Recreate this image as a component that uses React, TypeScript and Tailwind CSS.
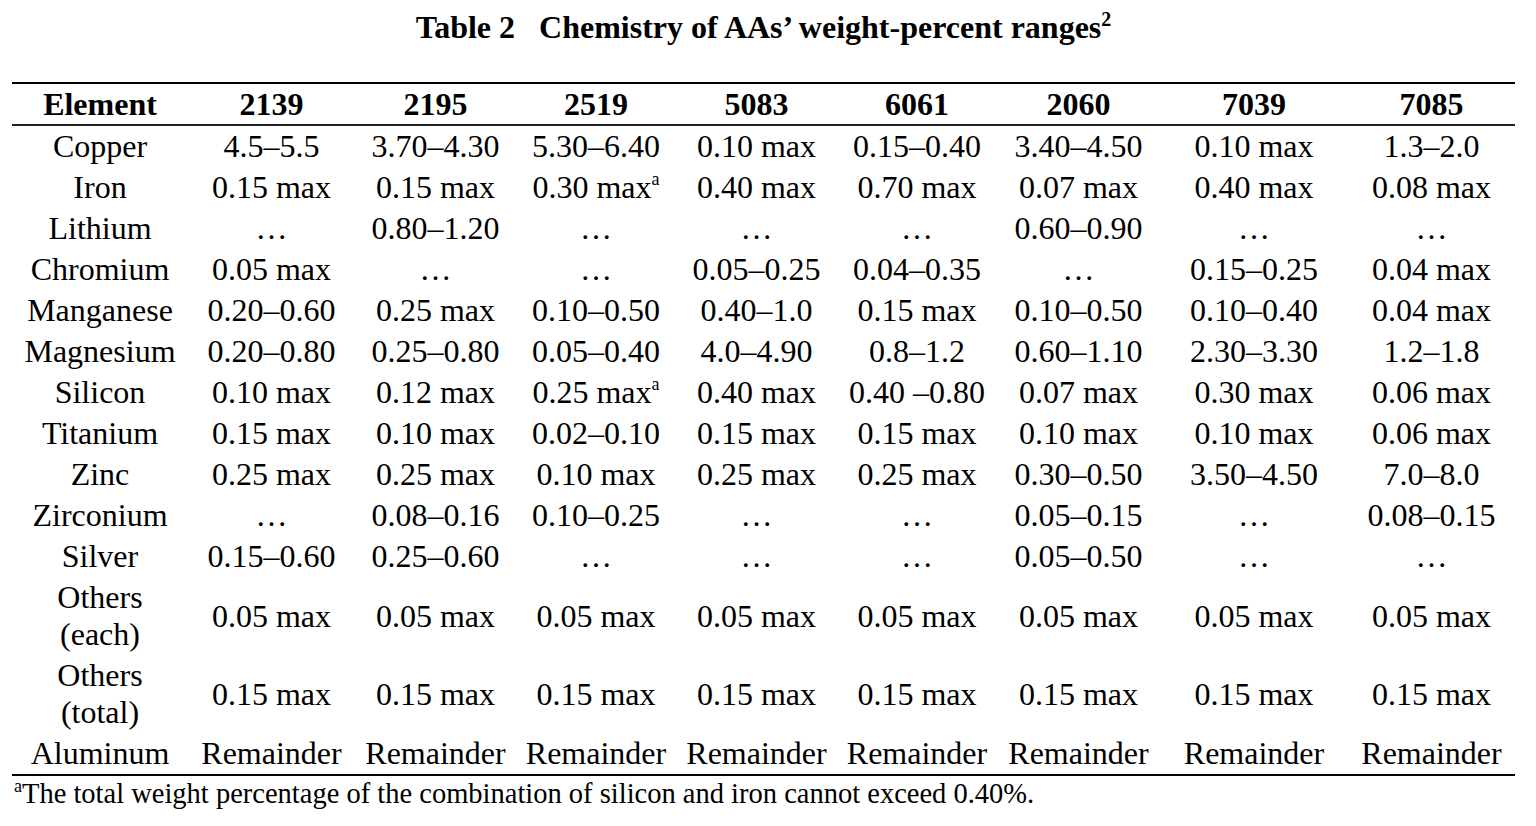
import React from 'react';

const alloys = ['2139', '2195', '2519', '5083', '6061', '2060', '7039', '7085'];

type Cell = string | { v: string; note: string };

const rows: { name: string[]; cells: Cell[]; tall?: boolean }[] = [
  { name: ['Copper'], cells: ['4.5–5.5', '3.70–4.30', '5.30–6.40', '0.10 max', '0.15–0.40', '3.40–4.50', '0.10 max', '1.3–2.0'] },
  { name: ['Iron'], cells: ['0.15 max', '0.15 max', { v: '0.30 max', note: 'a' }, '0.40 max', '0.70 max', '0.07 max', '0.40 max', '0.08 max'] },
  { name: ['Lithium'], cells: ['…', '0.80–1.20', '…', '…', '…', '0.60–0.90', '…', '…'] },
  { name: ['Chromium'], cells: ['0.05 max', '…', '…', '0.05–0.25', '0.04–0.35', '…', '0.15–0.25', '0.04 max'] },
  { name: ['Manganese'], cells: ['0.20–0.60', '0.25 max', '0.10–0.50', '0.40–1.0', '0.15 max', '0.10–0.50', '0.10–0.40', '0.04 max'] },
  { name: ['Magnesium'], cells: ['0.20–0.80', '0.25–0.80', '0.05–0.40', '4.0–4.90', '0.8–1.2', '0.60–1.10', '2.30–3.30', '1.2–1.8'] },
  { name: ['Silicon'], cells: ['0.10 max', '0.12 max', { v: '0.25 max', note: 'a' }, '0.40 max', '0.40 –0.80', '0.07 max', '0.30 max', '0.06 max'] },
  { name: ['Titanium'], cells: ['0.15 max', '0.10 max', '0.02–0.10', '0.15 max', '0.15 max', '0.10 max', '0.10 max', '0.06 max'] },
  { name: ['Zinc'], cells: ['0.25 max', '0.25 max', '0.10 max', '0.25 max', '0.25 max', '0.30–0.50', '3.50–4.50', '7.0–8.0'] },
  { name: ['Zirconium'], cells: ['…', '0.08–0.16', '0.10–0.25', '…', '…', '0.05–0.15', '…', '0.08–0.15'] },
  { name: ['Silver'], cells: ['0.15–0.60', '0.25–0.60', '…', '…', '…', '0.05–0.50', '…', '…'] },
  { name: ['Others', '(each)'], tall: true, cells: Array(8).fill('0.05 max') },
  { name: ['Others', '(total)'], tall: true, cells: Array(8).fill('0.15 max') },
  { name: ['Aluminum'], cells: Array(8).fill('Remainder') },
];

const cols = 'grid grid-cols-[176px_167px_161px_160px_161px_160px_163px_188px_167px]';

const Value: React.FC<{ cell: Cell }> = ({ cell }) => {
  if (typeof cell === 'string') return <span>{cell}</span>;
  return (
    <span>
      {cell.v}
      <sup className="text-[18px] top-[-0.75em]">{cell.note}</sup>
    </span>
  );
};

export default function App() {
  return (
    <div className="w-[1536px] h-[826px] bg-white text-black font-['Liberation_Serif','Times_New_Roman',serif]">
      <div className="ml-[12px] w-[1503px]">
        {/* caption */}
        <div className="h-[82px] pt-[7px]">
          <h1 className="text-center font-bold text-[32px] leading-[40px] whitespace-pre">
            Table 2   Chemistry of AAs’ weight-percent ranges
            <sup className="text-[20px] top-[-0.6em]">2</sup>
          </h1>
        </div>

        <div className="h-[2px] bg-black" />
        <div className={`${cols} h-[40px] items-center text-[32px] leading-[40px] font-bold`}>
          <div className="text-center">Element</div>
          {alloys.map((a) => (
            <div key={a} className="text-center">{a}</div>
          ))}
        </div>
        <div className="h-[2px] bg-[#222]" />

        {rows.map((r) => (
          <div
            key={r.name.join(' ')}
            className={`${cols} items-center text-[32px] ${r.tall ? 'h-[78px]' : 'h-[41px]'}`}
          >
            <div className={`text-center ${r.tall ? 'leading-[37px]' : 'leading-[41px]'}`}>
              {r.name.map((n) => (
                <div key={n}>{n}</div>
              ))}
            </div>
            {r.cells.map((c, i) => (
              <div key={i} className="text-center whitespace-nowrap leading-[41px]">
                <Value cell={c} />
              </div>
            ))}
          </div>
        ))}

        <div className="h-[2px] bg-black" />
        <p className="text-[28.5px] leading-[36px] pl-[2px] whitespace-nowrap">
          <sup className="text-[18px] top-[-0.6em]">a</sup>
          The total weight percentage of the combination of silicon and iron cannot exceed 0.40%.
        </p>
      </div>
    </div>
  );
}
